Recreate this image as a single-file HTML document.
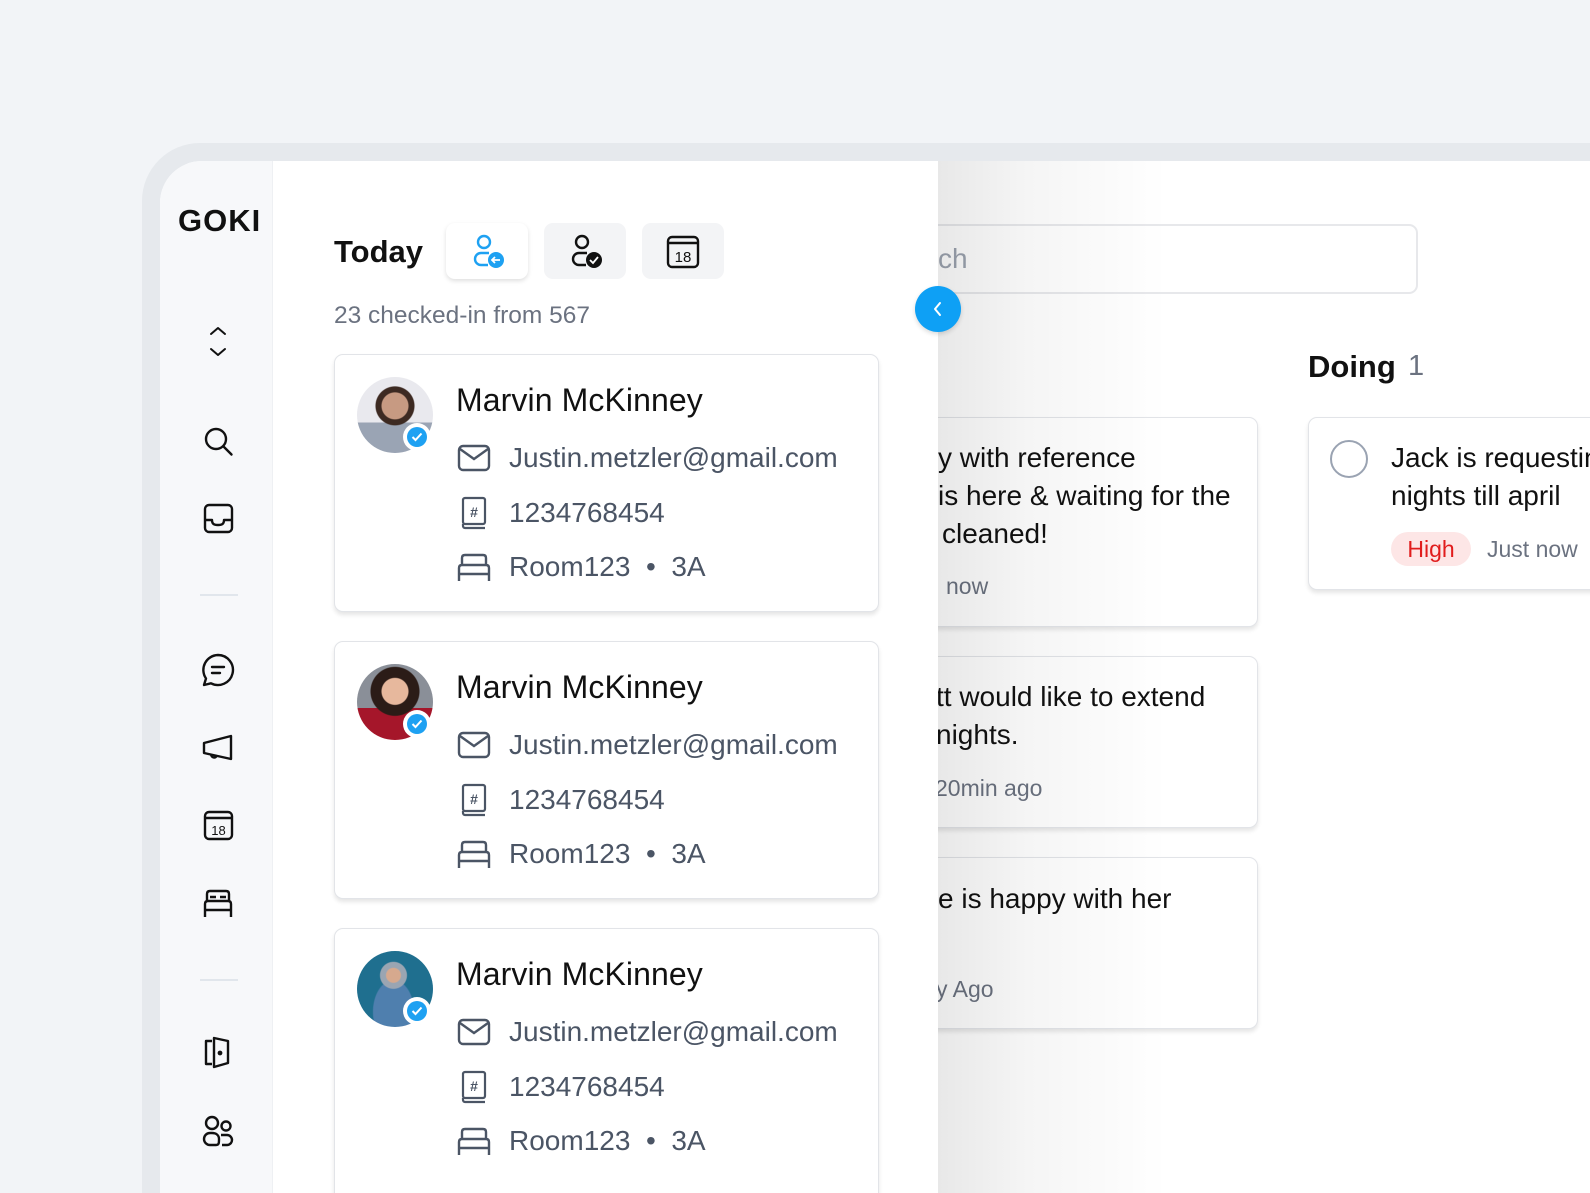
<!DOCTYPE html>
<html><head><meta charset="utf-8">
<style>
*{margin:0;padding:0;box-sizing:border-box}
html,body{width:1590px;height:1193px;overflow:hidden;background:#f2f4f7;font-family:"Liberation Sans",sans-serif}
#wrap{position:relative;width:1590px;height:1193px;overflow:hidden}
.abs{position:absolute}
#frame{left:142px;top:143px;width:1448px;height:1050px;background:#e6e9ed;border-radius:58px 0 0 0}
#inner{left:160px;top:161px;width:1430px;height:1032px;background:#fff;border-radius:42px 0 0 0;overflow:hidden}
#side{left:0;top:0;width:113px;height:1032px;background:#f7f8fa;border-right:1px solid #eef0f3}
#right{left:778px;top:0;width:652px;height:1032px;background:#fff;overflow:hidden}
#shade{left:778px;top:0;width:652px;height:1032px;background:linear-gradient(90deg,rgba(0,0,0,0.09) 0px,rgba(0,0,0,0.04) 90px,rgba(0,0,0,0) 230px);pointer-events:none;z-index:3}
#panel{left:113px;top:0;width:665px;height:1032px;background:#fff;border-radius:0 32px 0 0;z-index:4;overflow:hidden}
.card{position:absolute;left:61px;width:545px;height:258px;border:1px solid #e2e4e8;border-radius:9px;background:#fff;box-shadow:0 3px 4px rgba(0,0,0,0.10)}
.name{position:absolute;left:121px;top:27px;font-size:32px;color:#111;letter-spacing:0.1px}
.row{position:absolute;left:122px;font-size:28px;color:#4b5565;display:flex;align-items:center}
.row svg{margin-right:18px}
.av{position:absolute;left:22px;top:22px;width:76px;height:76px;border-radius:50%;overflow:hidden}
.badge{position:absolute;left:68px;top:68px;width:28px;height:28px;border-radius:50%;background:#fff;display:flex;align-items:center;justify-content:center}
.badge div{width:20px;height:20px;border-radius:50%;background:#1ea1f2;display:flex;align-items:center;justify-content:center}
.rc{position:absolute;border:1px solid #e2e4e8;border-radius:9px;background:#fff;box-shadow:0 3px 4px rgba(0,0,0,0.10)}
.t{position:absolute;font-size:28px;color:#111;white-space:nowrap}
.g{position:absolute;font-size:23px;color:#6b7280;white-space:nowrap}
.ic{position:absolute;left:40px}
</style></head><body>
<div id="wrap">
<div id="frame" class="abs"></div>
<div id="inner" class="abs">
  <div id="side" class="abs">
    <div class="abs" style="left:18px;top:42px;font-size:31px;font-weight:bold;color:#111;letter-spacing:1px">GOKI</div>
    <svg class="ic" style="top:164px" width="36" height="34" viewBox="0 0 36 34" fill="none" stroke="#111" stroke-width="2" stroke-linecap="round" stroke-linejoin="round"><path d="M11 9l7-6 7 6M11 24l7 6 7-6"/></svg>
    <svg class="ic" style="top:262px" width="36" height="36" viewBox="0 0 36 36" fill="none" stroke="#111" stroke-width="2.4" stroke-linecap="round"><circle cx="16" cy="16" r="10"/><path d="M23.5 23.5l8 8"/></svg>
    <svg class="ic" style="top:340px" width="36" height="36" viewBox="0 0 36 36" fill="none" stroke="#111" stroke-width="2.4" stroke-linejoin="round"><rect x="5" y="4" width="27" height="27" rx="4"/><path d="M5 19h7c0 4 2 5 6 5s6-1 6-5h8"/></svg>
    <div class="abs" style="left:40px;top:433px;width:38px;height:2px;background:#e1e6ec"></div>
    <svg class="ic" style="top:491px" width="36" height="36" viewBox="0 0 36 36" fill="none" stroke="#111" stroke-width="2.4" stroke-linecap="round" stroke-linejoin="round"><path d="M18 3a15 15 0 1 1-7 28.3L4 33l2-6.5A15 15 0 0 1 18 3z"/><path d="M12 15h12M12 21h8"/></svg>
    <svg class="ic" style="top:569px" width="36" height="36" viewBox="0 0 36 36" fill="none" stroke="#111" stroke-width="2.4" stroke-linejoin="round"><path d="M4 13l27-7v23l-27-6z"/><path d="M11 24c0 4 5 5 6 1"/></svg>
    <svg class="ic" style="top:646px" width="36" height="36" viewBox="0 0 36 36" fill="none" stroke="#111" stroke-width="2.4"><rect x="5" y="5" width="27" height="27" rx="4"/><path d="M5 11h27"/><text x="18.5" y="28" font-size="13" text-anchor="middle" fill="#111" stroke="none" font-family="Liberation Sans">18</text></svg>
    <svg class="ic" style="top:723px" width="36" height="36" viewBox="0 0 36 36" fill="none" stroke="#111" stroke-width="2.4" stroke-linejoin="round"><path d="M5 33V20c0-2 1-3 3-3h20c2 0 3 1 3 3v13M5 26h26M7 17V10c0-2 1-3 3-3h16c2 0 3 1 3 3v7"/><path d="M10 13h6M20 13h6"/></svg>
    <div class="abs" style="left:40px;top:818px;width:38px;height:2px;background:#e1e6ec"></div>
    <svg class="ic" style="top:873px" width="36" height="36" viewBox="0 0 36 36" fill="none" stroke="#111" stroke-width="2.4" stroke-linejoin="round"><path d="M12 7H6v23h6"/><path d="M14 4l14 3v22l-14 4z"/><circle cx="20" cy="19" r="1.2" fill="#111"/></svg>
    <svg class="ic" style="top:952px" width="36" height="36" viewBox="0 0 36 36" fill="none" stroke="#111" stroke-width="2.4"><circle cx="12" cy="10" r="6"/><circle cx="26" cy="13" r="4.5"/><path d="M12 20h-2a6 6 0 0 0 0 12h6c3 0 3-2 3-6s-3-6-7-6zM21 22h6a5 5 0 0 1 0 10h-5"/></svg>
  </div>

  <div id="right" class="abs">
    <div class="abs" style="left:-60px;top:63px;width:540px;height:70px;border:2px solid #e7e8eb;border-radius:9px"></div>
    <div class="g" style="left:0;top:82px;font-size:28px;color:#9ca3af">ch</div>
    <div class="rc" style="left:-300px;top:256px;width:620px;height:210px"></div>
    <div class="t" style="left:0;top:281px">y with reference</div>
    <div class="t" style="left:0;top:319px">is here &amp; waiting for the</div>
    <div class="t" style="left:4px;top:357px">cleaned!</div>
    <div class="g" style="left:8px;top:412px">now</div>
    <div class="rc" style="left:-300px;top:495px;width:620px;height:172px"></div>
    <div class="t" style="left:-2px;top:520px">tt would like to extend</div>
    <div class="t" style="left:-2px;top:558px">nights.</div>
    <div class="g" style="left:-3px;top:614px">20min ago</div>
    <div class="rc" style="left:-300px;top:696px;width:620px;height:172px"></div>
    <div class="t" style="left:0;top:722px">e is happy with her</div>
    <div class="g" style="left:-2px;top:815px">y Ago</div>

    <div class="t" style="left:370px;top:188px;font-size:31px;font-weight:bold">Doing</div>
    <div class="t" style="left:470px;top:189px;font-size:29px;color:#6b7280">1</div>
    <div class="rc" style="left:370px;top:256px;width:400px;height:173px"></div>
    <div class="abs" style="left:392px;top:279px;width:38px;height:38px;border-radius:50%;border:2px solid #9aa3b2"></div>
    <div class="t" style="left:453px;top:281px">Jack is requesting</div>
    <div class="t" style="left:453px;top:319px">nights till april</div>
    <div class="abs" style="left:453px;top:371px;width:80px;height:34px;border-radius:17px;background:#fde6e6;color:#e11d1d;font-size:23px;text-align:center;line-height:34px">High</div>
    <div class="g" style="left:549px;top:375px">Just now</div>
  </div>
  <div id="shade" class="abs"></div>

  <div id="panel" class="abs">
    <div class="abs" style="left:61px;top:73px;font-size:31px;font-weight:bold;color:#111">Today</div>
    <div class="abs" style="left:173px;top:62px;width:82px;height:56px;border-radius:9px;background:#fff;box-shadow:0 2px 5px rgba(0,0,0,0.13)">
      <svg style="position:absolute;left:24px;top:11px" width="36" height="36" viewBox="0 0 36 36" fill="none" stroke="#1ea1f2" stroke-width="2.4"><circle cx="14" cy="8" r="6"/><path d="M19 19h-8a6 6 0 0 0 0 12h7"/><circle cx="26" cy="26" r="8" fill="#1ea1f2" stroke="none"/><path d="M30 26h-8M25 23l-3 3 3 3" stroke="#fff" stroke-width="1.8"/></svg>
    </div>
    <div class="abs" style="left:271px;top:62px;width:82px;height:56px;border-radius:9px;background:#f3f4f6">
      <svg style="position:absolute;left:24px;top:11px" width="36" height="36" viewBox="0 0 36 36" fill="none" stroke="#111" stroke-width="2.4"><circle cx="14" cy="8" r="6"/><path d="M19 19h-8a6 6 0 0 0 0 12h7"/><circle cx="26" cy="26" r="8" fill="#111" stroke="none"/><path d="M22 26l3 3 5-6" stroke="#fff" stroke-width="1.8"/></svg>
    </div>
    <div class="abs" style="left:369px;top:62px;width:82px;height:56px;border-radius:9px;background:#f3f4f6">
      <svg style="position:absolute;left:23px;top:10px" width="36" height="36" viewBox="0 0 36 36" fill="none" stroke="#111" stroke-width="2.4"><rect x="3" y="4" width="30" height="30" rx="4"/><path d="M3 10h30"/><text x="18" y="29" font-size="15" text-anchor="middle" fill="#111" stroke="none" font-family="Liberation Sans">18</text></svg>
    </div>
    <div class="abs" style="left:61px;top:141px;font-size:24.5px;color:#6b7280">23 checked-in from 567</div>

    <div class="card" style="top:193px">
      <div class="av" style="background:radial-gradient(circle at 50% 38%,#c79a82 0 13px,#3d2a22 14px 19px,transparent 20px),linear-gradient(#e9e9ee 60%,#9aa4b4 60%)"></div>
      <div class="badge"><div><svg width="12" height="10" viewBox="0 0 12 10" fill="none" stroke="#fff" stroke-width="2"><path d="M1.5 5l3 3 6-6.5"/></svg></div></div>
      <div class="name">Marvin McKinney</div>
      <div class="row" style="top:87px"><svg width="34" height="28" viewBox="0 0 34 28" fill="none" stroke="#4b5565" stroke-width="2.4"><rect x="2" y="2" width="30" height="24" rx="4"/><path d="M3 5l14 10 14-10"/></svg>Justin.metzler@gmail.com</div>
      <div class="row" style="top:141px"><svg width="34" height="34" viewBox="0 0 34 34" fill="none" stroke="#4b5565" stroke-width="2.2"><rect x="6" y="2" width="22" height="26" rx="2"/><path d="M6 28v2a2 2 0 0 0 2 2h20"/><text x="17" y="21" font-size="14" font-weight="bold" text-anchor="middle" fill="#4b5565" stroke="none" font-family="Liberation Sans">#</text></svg>1234768454</div>
      <div class="row" style="top:196px"><svg width="34" height="32" viewBox="0 0 34 32" fill="none" stroke="#4b5565" stroke-width="2.4" stroke-linejoin="round"><path d="M2 30V17c0-2 1-3 3-3h24c2 0 3 1 3 3v13M2 23h30M5 14V7c0-2 1-3 3-3h18c2 0 3 1 3 3v7"/></svg>Room123 &nbsp;•&nbsp; 3A</div>
    </div>

    <div class="card" style="top:480px">
      <div class="av" style="background:radial-gradient(circle at 50% 36%,#e7b89d 0 13px,#2b1c17 14px 24px,transparent 25px),linear-gradient(#8a8f98 58%,#a5162a 58%)"></div>
      <div class="badge"><div><svg width="12" height="10" viewBox="0 0 12 10" fill="none" stroke="#fff" stroke-width="2"><path d="M1.5 5l3 3 6-6.5"/></svg></div></div>
      <div class="name">Marvin McKinney</div>
      <div class="row" style="top:87px"><svg width="34" height="28" viewBox="0 0 34 28" fill="none" stroke="#4b5565" stroke-width="2.4"><rect x="2" y="2" width="30" height="24" rx="4"/><path d="M3 5l14 10 14-10"/></svg>Justin.metzler@gmail.com</div>
      <div class="row" style="top:141px"><svg width="34" height="34" viewBox="0 0 34 34" fill="none" stroke="#4b5565" stroke-width="2.2"><rect x="6" y="2" width="22" height="26" rx="2"/><path d="M6 28v2a2 2 0 0 0 2 2h20"/><text x="17" y="21" font-size="14" font-weight="bold" text-anchor="middle" fill="#4b5565" stroke="none" font-family="Liberation Sans">#</text></svg>1234768454</div>
      <div class="row" style="top:196px"><svg width="34" height="32" viewBox="0 0 34 32" fill="none" stroke="#4b5565" stroke-width="2.4" stroke-linejoin="round"><path d="M2 30V17c0-2 1-3 3-3h24c2 0 3 1 3 3v13M2 23h30M5 14V7c0-2 1-3 3-3h18c2 0 3 1 3 3v7"/></svg>Room123 &nbsp;•&nbsp; 3A</div>
    </div>

    <div class="card" style="top:767px;height:280px">
      <div class="av" style="background:radial-gradient(circle at 48% 32%,#d6a98e 0 7px,#9aa5b2 8px 13px,transparent 14px),radial-gradient(ellipse at 48% 80%,#4f7fae 0 20px,transparent 21px),#1f6f8f"></div>
      <div class="badge"><div><svg width="12" height="10" viewBox="0 0 12 10" fill="none" stroke="#fff" stroke-width="2"><path d="M1.5 5l3 3 6-6.5"/></svg></div></div>
      <div class="name">Marvin McKinney</div>
      <div class="row" style="top:87px"><svg width="34" height="28" viewBox="0 0 34 28" fill="none" stroke="#4b5565" stroke-width="2.4"><rect x="2" y="2" width="30" height="24" rx="4"/><path d="M3 5l14 10 14-10"/></svg>Justin.metzler@gmail.com</div>
      <div class="row" style="top:141px"><svg width="34" height="34" viewBox="0 0 34 34" fill="none" stroke="#4b5565" stroke-width="2.2"><rect x="6" y="2" width="22" height="26" rx="2"/><path d="M6 28v2a2 2 0 0 0 2 2h20"/><text x="17" y="21" font-size="14" font-weight="bold" text-anchor="middle" fill="#4b5565" stroke="none" font-family="Liberation Sans">#</text></svg>1234768454</div>
      <div class="row" style="top:196px"><svg width="34" height="32" viewBox="0 0 34 32" fill="none" stroke="#4b5565" stroke-width="2.4" stroke-linejoin="round"><path d="M2 30V17c0-2 1-3 3-3h24c2 0 3 1 3 3v13M2 23h30M5 14V7c0-2 1-3 3-3h18c2 0 3 1 3 3v7"/></svg>Room123 &nbsp;•&nbsp; 3A</div>
    </div>
  </div>

  <div class="abs" style="left:755px;top:125px;width:46px;height:46px;border-radius:50%;background:#0ea0f5;z-index:6;box-shadow:0 2px 5px rgba(0,0,0,0.15)">
    <svg style="position:absolute;left:15px;top:15px" width="16" height="16" viewBox="0 0 16 16" fill="none" stroke="#fff" stroke-width="2" stroke-linecap="round" stroke-linejoin="round"><path d="M10 2l-5 6 5 6"/></svg>
  </div>
</div>
</div>
</body></html>
